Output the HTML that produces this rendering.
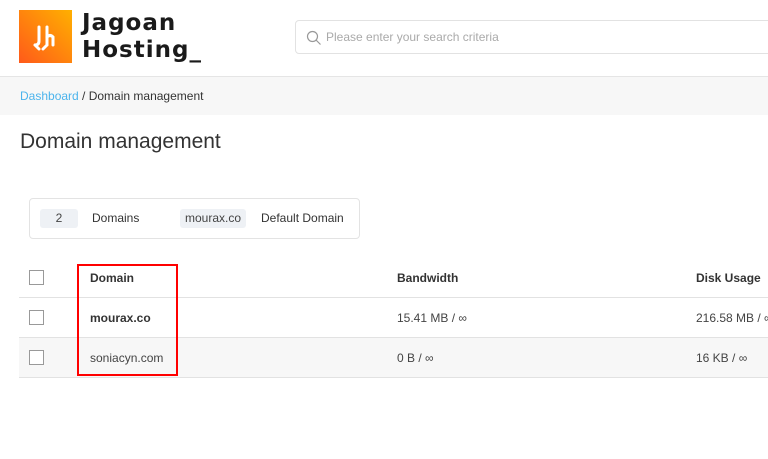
<!DOCTYPE html>
<html><head><style>
*{margin:0;padding:0;box-sizing:border-box}
body{width:768px;height:459px;overflow:hidden;background:#fff;font-family:"Liberation Sans",sans-serif;position:relative;color:#333}
.abs{position:absolute}
.logo{left:19px;top:10px;width:53px;height:53px;background:linear-gradient(45deg,#ff5a1a,#ffb000)}
.brand{left:82px;top:10px;font-size:23px;line-height:27px;color:#1a1a1a;letter-spacing:1px;font-weight:bold;font-family:"DejaVu Sans","Liberation Sans",sans-serif}
.search{left:295px;top:20px;width:490px;height:34px;border:1px solid #e2e2e2;border-radius:4px}
.crumb{left:0;top:76px;width:768px;height:39px;background:#f7f7f7;border-top:1px solid #e5e5e5}
.crumb span{position:absolute;left:20px;top:12px;font-size:12px;color:#333}
h1{position:absolute;left:20px;top:130px;font-size:21px;font-weight:normal;color:#333}
.info{left:29px;top:198px;width:331px;height:41px;border:1px solid #e3e3e3;border-radius:4px}
.pill{position:absolute;top:10px;height:19px;background:#eef1f5;border-radius:3px;font-size:12px;line-height:19px;text-align:center;color:#444}
.lbl{position:absolute;top:12px;font-size:12px;color:#333}
.row{position:absolute;left:19px;width:760px;height:40px;border-bottom:1px solid #e2e2e2}
.cb{position:absolute;left:10px;top:12px;width:15px;height:15px;border:1px solid #999;background:#fff}
.c{position:absolute;top:13px;font-size:12px;color:#444}
b{color:#333}
</style></head><body>
<div class="abs logo"><svg width="53" height="53" viewBox="0 0 53 53"><path d="M20 17v14q0 4-4 4M28 17v18M28 27q3-3 6 0v8M16 35l4 4M28 35l-4 4" stroke="#fff" stroke-width="3" fill="none" stroke-linecap="round"/></svg></div>
<div class="abs brand">Jagoan<br>Hosting_</div>
<div class="abs search"><svg class="abs" style="left:10px;top:9px" width="16" height="16"><circle cx="6.5" cy="6.5" r="5" stroke="#999" fill="none" stroke-width="1.2"/><path d="M10 10l4.5 4.5" stroke="#999" stroke-width="1.2"/></svg><span class="abs" style="left:30px;top:9px;font-size:12px;color:#aaa">Please enter your search criteria</span></div>
<div class="abs crumb"><span><a style="color:#4cb4ec">Dashboard</a> / Domain management</span></div>
<h1>Domain management</h1>
<div class="abs info">
<div class="pill" style="left:10px;width:38px">2</div><div class="lbl" style="left:62px">Domains</div>
<div class="pill" style="left:150px;width:66px">mourax.co</div><div class="lbl" style="left:231px">Default Domain</div>
</div>
<div class="row" style="top:258px"><div class="cb"></div><div class="c" style="left:71px;top:13px"><b>Domain</b></div><div class="c" style="left:378px"><b>Bandwidth</b></div><div class="c" style="left:677px"><b>Disk Usage</b></div></div>
<div class="row" style="top:298px"><div class="cb"></div><div class="c" style="left:71px"><b>mourax.co</b></div><div class="c" style="left:378px">15.41 MB / ∞</div><div class="c" style="left:677px">216.58 MB / ∞</div></div>
<div class="row" style="top:338px;background:#f7f7f7"><div class="cb"></div><div class="c" style="left:71px">soniacyn.com</div><div class="c" style="left:378px">0 B / ∞</div><div class="c" style="left:677px">16 KB / ∞</div></div>
<div class="abs" style="left:77px;top:264px;width:101px;height:112px;border:2px solid #f00"></div>
</body></html>
